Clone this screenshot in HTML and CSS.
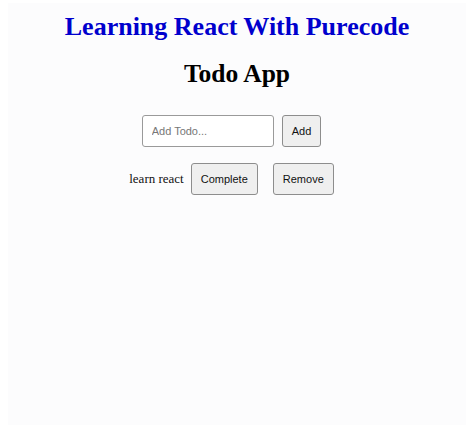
FILE: index.html
```html
<!DOCTYPE html>
<html lang="en">
<head>
<meta charset="utf-8">
<title>Todo App</title>
<link rel="stylesheet" href="styles.css">
</head>
<body>
<div class="page">
  <h1 class="title">Learning React With Purecode</h1>
  <h2 class="subtitle">Todo App</h2>
  <form class="row add-row">
    <input class="todo-input" type="text" placeholder="Add Todo...">
    <button class="btn" type="button">Add</button>
  </form>
  <ul class="todo-list">
    <li class="row todo-item">
      <span class="todo-text">learn react</span>
      <button class="btn btn-complete" type="button">Complete</button>
      <button class="btn" type="button">Remove</button>
    </li>
  </ul>
</div>
</body>
</html>
```
FILE: styles.css
```css
html, body {
  margin: 0;
  padding: 0;
  background: #ffffff;
}

.page {
  margin: 3px 8px 4px;
  min-height: 422px;
  background: #fcfcfd;
  text-align: center;
  font-family: "Liberation Serif", "Times New Roman", serif;
  overflow: hidden;
}

.title {
  margin: 9px 0 0;
  font-size: 26px;
  line-height: 30px;
  font-weight: bold;
  color: #0000cd;
}

.subtitle {
  margin: 17px 0 0;
  font-size: 25.5px;
  line-height: 30px;
  font-weight: bold;
  color: #000;
}

.row {
  display: flex;
  justify-content: center;
  align-items: center;
  padding-right: 11px;
}

.add-row {
  margin: 26px 0 0;
  gap: 8px;
}

.todo-input {
  box-sizing: border-box;
  width: 132px;
  height: 32px;
  margin: 0;
  padding: 0 9px;
  border: 1px solid #9a9a9a;
  border-radius: 3px;
  background: #fff;
  font-family: "Liberation Sans", Arial, sans-serif;
  font-size: 11px;
  color: #000;
  outline: none;
}

.todo-input::placeholder {
  color: #777;
}

.btn {
  box-sizing: border-box;
  height: 32px;
  margin: 0;
  padding: 0 9px;
  border: 1px solid #8d8d8d;
  border-radius: 3px;
  background: #efefef;
  font-family: "Liberation Sans", Arial, sans-serif;
  font-size: 11px;
  color: #111;
}

.todo-list {
  list-style: none;
  margin: 16px 0 0;
  padding: 0;
}

.todo-text {
  font-size: 13px;
  color: #111;
  margin-right: 7px;
}

.btn-complete {
  margin-right: 15px;
}
```
